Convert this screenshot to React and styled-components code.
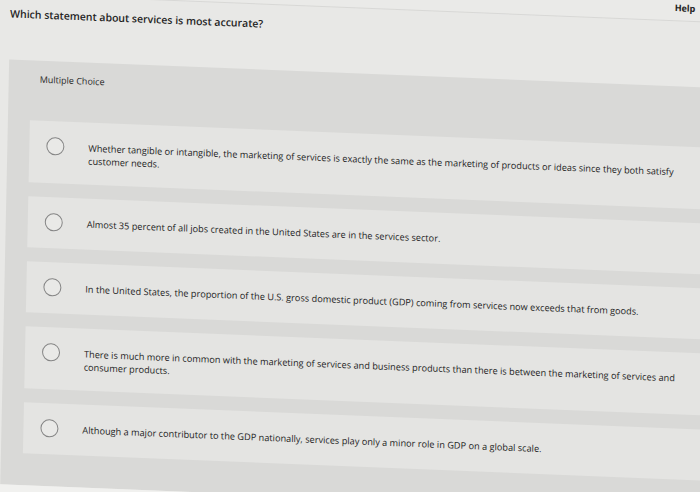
import React from 'react';
import styled, { createGlobalStyle } from 'styled-components';

const GlobalStyle = createGlobalStyle`
  html, body {
    margin: 0;
    padding: 0;
    background: #e7e7e5;
    overflow: hidden;
  }
  body {
    font-family: "Open Sans", "Liberation Sans", Arial, sans-serif;
    color: #262626;
  }
`;

const options = [
  'Whether tangible or intangible, the marketing of services is exactly the same as the marketing of products or ideas since they both satisfy customer needs.',
  'Almost 35 percent of all jobs created in the United States are in the services sector.',
  'In the United States, the proportion of the U.S. gross domestic product (GDP) coming from services now exceeds that from goods.',
  'There is much more in common with the marketing of services and business products than there is between the marketing of services and consumer products.',
  'Although a major contributor to the GDP nationally, services play only a minor role in GDP on a global scale.',
];

export default function App() {
  return (
    <Page>
      <GlobalStyle />
      {/* the reference is a photo of a screen, so the sheet is tilted a little */}
      <Sheet>
        <TopBar>
          <HelpLink>Help</HelpLink>
        </TopBar>
        <Question>Which statement about services is most accurate?</Question>
        <Panel>
          <PanelLabel>Multiple Choice</PanelLabel>
          <OptionList>
            {options.map((text) => (
              <Option key={text}>
                <Radio />
                <OptionText>{text}</OptionText>
              </Option>
            ))}
          </OptionList>
        </Panel>
        <BottomStrip />
      </Sheet>
    </Page>
  );
}

const Page = styled.div`
  width: 700px;
  height: 492px;
  overflow: hidden;
  background: #e7e7e5;
`;

const Sheet = styled.div`
  width: 740px;
  transform: translateY(-28px) rotate(1.2deg) skewY(1.1deg);
  transform-origin: 0 0;
  background: #e8e8e6;
`;

const TopBar = styled.div`
  display: flex;
  justify-content: flex-end;
  align-items: flex-start;
  box-sizing: border-box;
  height: 22px;
  padding: 3px 44px 0 0;
  background: #eaeae8;
  border-bottom: 1px solid #d8d8d6;
`;

const HelpLink = styled.span`
  font-size: 9px;
  font-weight: 700;
  line-height: 12px;
  color: #222;
`;

const Question = styled.div`
  margin: 12px 0 0 11px;
  font-size: 10.5px;
  font-weight: 600;
  line-height: 14px;
  color: #232323;
`;

const Panel = styled.div`
  margin: 39px 0 0 11px;
  padding: 13px 0 32px 0;
  background: #d9d9d7;
`;

const PanelLabel = styled.div`
  padding-left: 31px;
  font-size: 9px;
  line-height: 12px;
  color: #2a2a2a;
`;

const OptionList = styled.div`
  display: flex;
  flex-direction: column;
  gap: 14px;
  margin: 35px 0 0 22px;
`;

const Option = styled.div`
  display: flex;
  align-items: flex-start;
  gap: 24px;
  padding: 16px 0 17px 17px;
  background: #e4e4e2;
`;

const Radio = styled.span`
  flex: none;
  width: 16px;
  height: 16px;
  border: 1.5px solid #858585;
  border-radius: 50%;
  background: #e9e9e7;
`;

const OptionText = styled.div`
  max-width: 605px;
  margin-top: 3px;
  font-size: 9.2px;
  line-height: 13px;
  color: #1f1f1f;
`;

const BottomStrip = styled.div`
  height: 30px;
  background: #f1f1ef;
`;
